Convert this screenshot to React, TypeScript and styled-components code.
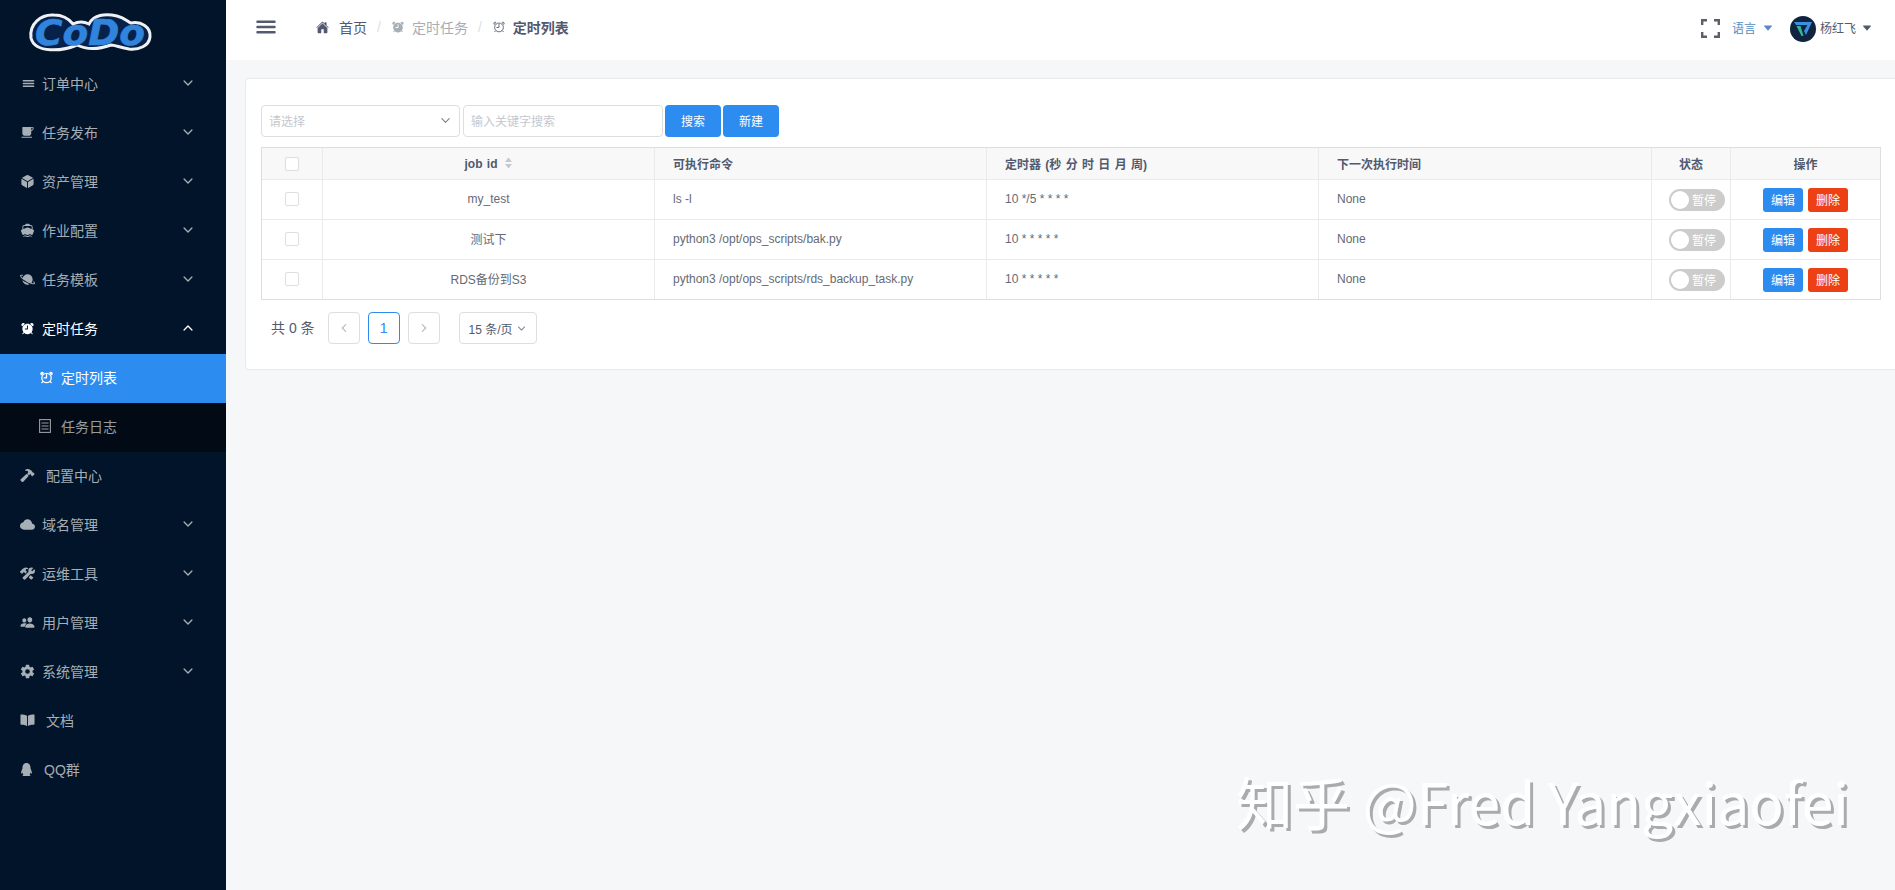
import React from "react";
import styled, { createGlobalStyle } from "styled-components";
import {
  IoReorderThree, IoCafe, IoCube, IoBoat, IoPlanet, IoAlarm, IoAlarmOutline,
  IoHammer, IoCloud, IoConstruct, IoPeople, IoSettingsSharp, IoBook, IoChevronDown, IoChevronUp,
  IoChevronBack, IoChevronForward, IoHome, IoMenu, IoCaretDown,
} from "react-icons/io5";
import { FaQq } from "react-icons/fa";

const FONT = `"Liberation Sans", "Noto Sans CJK SC", sans-serif`;

const Global = createGlobalStyle`
  html, body { margin: 0; padding: 0; height: 100%; overflow: hidden; }
  body { font-family: ${FONT}; background: #f5f7f9; }
  * { box-sizing: border-box; }
`;

const Page = styled.div`
  display: flex;
  width: 1895px;
  height: 890px;
  position: relative;
`;

const Sidebar = styled.aside`
  width: 226px;
  flex: none;
  background: #011429;
  display: flex;
  flex-direction: column;
`;

const LogoBox = styled.div`
  height: 60px;
  display: flex;
  padding: 12px 0 0 27px;
  flex: none;
`;

const MenuRow = styled.div<{ $active?: boolean }>`
  height: 49px;
  flex: none;
  display: flex;
  align-items: center;
  padding: 0 31px 3px 21px;
  font-size: 14px;
  color: ${(p) => (p.$active ? "#fff" : "rgba(255,255,255,.66)")};
`;

const SubRow = styled.div<{ $active?: boolean }>`
  height: 49px;
  flex: none;
  display: flex;
  align-items: center;
  padding: 0 0 3px 40px;
  font-size: 14px;
  color: ${(p) => (p.$active ? "#fff" : "rgba(255,255,255,.6)")};
  background: ${(p) => (p.$active ? "#2d8cf0" : "#020b15")};
`;

const ThickAlarm = styled(IoAlarmOutline)`
  path, circle, line { stroke-width: 44px; }
`;

const MenuIcon = styled.span<{ $w?: number }>`
  width: ${(p) => p.$w ?? 21}px;
  flex: none;
  display: flex;
  align-items: center;
  font-size: 15px;
  margin-left: -1px;
  margin-right: 1px;
`;

const Chevron = styled.span`
  margin-left: auto;
  display: flex;
  font-size: 14px;
`;

const Main = styled.div`
  flex: 1;
  display: flex;
  flex-direction: column;
  min-width: 0;
`;

const Header = styled.header`
  height: 60px;
  flex: none;
  background: #fff;
  display: flex;
  align-items: center;
  padding: 0 22px 6px 28px;
`;

const Burger = styled.span`
  display: flex;
  font-size: 26px;
  color: #515a6e;
  width: 63px;
  margin-left: -1px;
`;

const Crumb = styled.span<{ $tone: "dark" | "muted" | "bold"; $gap?: number }>`
  display: flex;
  align-items: center;
  font-size: 14px;
  gap: ${(p) => p.$gap ?? 7}px;
  font-weight: ${(p) => (p.$tone === "bold" ? 700 : 400)};
  color: ${(p) => (p.$tone === "muted" ? "#a8adb6" : "#515a6e")};
  svg { font-size: 14px; }
`;

const Sep = styled.span<{ $m: number }>`
  color: #dcdee2;
  font-size: 14px;
  margin: 0 ${(p) => p.$m}px;
`;

const HeaderRight = styled.div`
  margin-left: auto;
  display: flex;
  align-items: center;
  padding-top: 3px;
`;

const Lang = styled.span`
  font-size: 12px;
  color: #4f8fc4;
  display: flex;
  align-items: center;
  gap: 6px;
  margin-left: 12px;
  margin-right: 16px;
  padding-bottom: 2px;
  svg { color: #5b86cc; font-size: 12px; }
`;

const Avatar = styled.span`
  width: 26px;
  height: 26px;
  border-radius: 50%;
  background: #10233f;
  display: flex;
  align-items: center;
  justify-content: center;
  margin-right: 4px;
`;

const UserName = styled.span`
  font-size: 12px;
  color: #515a6e;
  display: flex;
  align-items: center;
  gap: 5px;
  padding-bottom: 2px;
  svg { font-size: 12px; }
`;

const Content = styled.div`
  padding: 18px 0 0 19px;
`;

const Card = styled.section`
  background: #fff;
  border: 1px solid #e8eaec;
  border-right: 0;
  border-radius: 4px 0 0 4px;
  height: 292px;
  padding: 26px 14px 0 15px;
`;

const Toolbar = styled.div`
  display: flex;
  height: 32px;
  margin-bottom: 10px;
`;

const Field = styled.div<{ $w: number; $mr: number }>`
  width: ${(p) => p.$w}px;
  margin-right: ${(p) => p.$mr}px;
  height: 32px;
  border: 1px solid #dcdee2;
  border-radius: 4px;
  display: flex;
  align-items: center;
  padding: 0 7px 2px;
  font-size: 12px;
  color: #c5c8ce;
  background: #fff;
`;

const FieldArrow = styled.span`
  margin-left: auto;
  display: flex;
  color: #808695;
  font-size: 13px;
`;

const PrimaryButton = styled.button`
  width: 56px;
  height: 32px;
  border: 0;
  border-radius: 4px;
  background: #2d8cf0;
  color: #fff;
  font: 12px ${FONT};
  margin-right: 2px;
  padding: 0 0 2px;
`;

const Table = styled.table`
  width: 1620px;
  table-layout: fixed;
  border-collapse: separate;
  border-spacing: 0;
  border: 1px solid #dcdee2;
  font-size: 12px;
  color: #666a72;
`;

const Th = styled.th<{ $center?: boolean }>`
  height: 32px;
  background: #f8f8f9;
  font-weight: 700;
  color: #515a6e;
  word-spacing: 1px;
  text-align: ${(p) => (p.$center ? "center" : "left")};
  padding: 0 18px;
  border-right: 1px solid #e8eaec;
  border-bottom: 1px solid #e8eaec;
  &:last-child { border-right: 0; }
`;

const Td = styled.td<{ $center?: boolean }>`
  height: 40px;
  text-align: ${(p) => (p.$center ? "center" : "left")};
  padding: 0 18px 2px;
  border-right: 1px solid #e8eaec;
  border-bottom: 1px solid #e8eaec;
  white-space: nowrap;
  &:last-child { border-right: 0; }
  tr:last-child > & { border-bottom: 0; height: 39px; }
`;

const CheckCell = styled(Td)`
  padding: 0 0 1px;
`;

const CheckHead = styled(Th)`
  padding: 0;
`;

const Check = styled.span`
  display: inline-block;
  width: 14px;
  height: 14px;
  border: 1px solid #dcdee2;
  border-radius: 2px;
  background: #fff;
  vertical-align: middle;
`;

const Sort = styled.svg`
  margin-left: 6px;
  vertical-align: -1px;
`;

const SwitchCell = styled(Td)`
  padding: 0 0 0 17px;
`;

const Switch = styled.span`
  display: flex;
  align-items: center;
  width: 56px;
  height: 22px;
  border-radius: 11px;
  background: #ccc;
  color: #fff;
  font-size: 12px;
  padding-left: 2px;
  gap: 3px;
`;

const Knob = styled.span`
  width: 18px;
  height: 18px;
  border-radius: 50%;
  background: #fff;
`;

const Actions = styled.div`
  display: flex;
  justify-content: center;
  gap: 5px;
`;

const SmallButton = styled.button<{ $danger?: boolean }>`
  width: 40px;
  height: 24px;
  border: 0;
  border-radius: 3px;
  color: #fff;
  font: 12px ${FONT};
  padding: 0;
  background: ${(p) => (p.$danger ? "#ed4014" : "#2d8cf0")};
`;

const ActionCell = styled(Td)`
  padding: 0;
`;

const Pager = styled.div`
  display: flex;
  align-items: center;
  margin-top: 12px;
  padding-left: 10px;
  height: 32px;
  font-size: 14px;
  color: #515a6e;
`;

const Total = styled.span`
  margin-right: 13px;
  white-space: nowrap;
  padding-bottom: 3px;
`;

const PageBtn = styled.span<{ $active?: boolean }>`
  width: 32px;
  height: 32px;
  border: 1px solid ${(p) => (p.$active ? "#2d8cf0" : "#dcdee2")};
  border-radius: 4px;
  margin-right: 8px;
  display: flex;
  align-items: center;
  justify-content: center;
  font-size: ${(p) => (p.$active ? "14px" : "12px")};
  color: ${(p) => (p.$active ? "#2d8cf0" : "#b5bac4")};
  background: #fff;
`;

const SizeSelect = styled.span`
  width: 78px;
  height: 32px;
  margin-left: 11px;
  border: 1px solid #dcdee2;
  border-radius: 4px;
  display: flex;
  align-items: center;
  padding-left: 9px;
  gap: 3px;
  font-size: 12px;
  white-space: nowrap;
  svg { font-size: 11px; color: #808695; }
`;

const Watermark = styled.div`
  position: absolute;
  left: 1236px;
  top: 760px;
  font-family: "Noto Sans CJK SC", sans-serif;
  font-size: 57px;
  line-height: 80px;
  color: #fff;
  text-shadow: 3px 3px 0 #a9abad;
  white-space: nowrap;
`;

const Logo = () => (
  <svg width="126" height="42" viewBox="0 0 126 42" aria-label="CoDo">
    <path
      d="M4 26 C2 12 14 2 27 3 C37 3 42 7 46 12 C52 9 58 10 62 12 C66 3 78 1 90 4 C98 6 101 10 104 11 C114 9 124 15 123 25 C122 34 112 38 102 37 C94 36 88 33 84 33 C70 38 58 37 50 33 C36 39 8 42 4 26 Z"
      fill="#06214a"
      stroke="#eef1f5"
      strokeWidth="3"
    />
    <text
      x="8"
      y="33"
      fontFamily="'DejaVu Sans', sans-serif"
      fontWeight="700"
      fontStyle="italic"
      fontSize="36"
      fill="#3184dc"
      stroke="#3184dc"
      strokeWidth="0.6"
      textLength="110"
      lengthAdjust="spacingAndGlyphs"
    >
      CoDo
    </text>
  </svg>
);

const VLogo = () => (
  <svg width="20" height="18" viewBox="0 0 20 18">
    <path d="M1 2 H19 L13 15 L11 11 L14.5 5 H3 Z" fill="#3d8fe0" />
    <path d="M3.5 6 H7.5 L10.5 16 H8.5 Z" fill="#2fb89a" />
  </svg>
);

const Fullscreen = () => (
  <svg width="19" height="19" viewBox="0 0 19 19" fill="none" stroke="#5a5f69" strokeWidth="2.4">
    <path d="M1.2 6V1.2H6M13 1.2H17.8V6M17.8 13V17.8H13M6 17.8H1.2V13" />
  </svg>
);

const LogList = () => (
  <svg width="12" height="14" viewBox="0 0 12 14" fill="none" stroke="currentColor" strokeWidth="1.1">
    <rect x="0.6" y="0.6" width="10.8" height="12.8" />
    <path d="M2.5 4H9.5M2.5 7H9.5M2.5 10H9.5" />
  </svg>
);

type Item = { icon: React.ReactNode; label: string; open?: boolean; chevron?: boolean; active?: boolean; w?: number };

const items: Item[] = [
  { icon: <IoReorderThree size={17} />, label: "订单中心", chevron: true },
  { icon: <IoCafe />, label: "任务发布", chevron: true },
  { icon: <IoCube />, label: "资产管理", chevron: true },
  { icon: <IoBoat />, label: "作业配置", chevron: true },
  { icon: <IoPlanet />, label: "任务模板", chevron: true },
  { icon: <IoAlarm />, label: "定时任务", chevron: true, open: true, active: true },
  { icon: <IoHammer />, label: "配置中心", w: 25 },
  { icon: <IoCloud />, label: "域名管理", chevron: true },
  { icon: <IoConstruct />, label: "运维工具", chevron: true },
  { icon: <IoPeople />, label: "用户管理", chevron: true },
  { icon: <IoSettingsSharp />, label: "系统管理", chevron: true },
  { icon: <IoBook />, label: "文档", w: 25 },
  { icon: <FaQq size={13} />, label: "QQ群", w: 23 },
];

const rows = [
  { id: "my_test", cmd: "ls -l", cron: "10 */5 * * * *" },
  { id: "测试下", cmd: "python3 /opt/ops_scripts/bak.py", cron: "10 * * * * *" },
  { id: "RDS备份到S3", cmd: "python3 /opt/ops_scripts/rds_backup_task.py", cron: "10 * * * * *" },
];

const widths = [61, 332, 332, 332, 333, 79, 149];

export default function App() {
  return (
    <Page>
      <Global />
      <Sidebar>
        <LogoBox>
          <Logo />
        </LogoBox>
        {items.map((it) => (
          <React.Fragment key={it.label}>
            <MenuRow $active={it.active}>
              <MenuIcon $w={it.w}>{it.icon}</MenuIcon>
              {it.label}
              {it.chevron && <Chevron>{it.open ? <IoChevronUp /> : <IoChevronDown />}</Chevron>}
            </MenuRow>
            {it.open && (
              <>
                <SubRow $active>
                  <MenuIcon><ThickAlarm /></MenuIcon>
                  定时列表
                </SubRow>
                <SubRow>
                  <MenuIcon><LogList /></MenuIcon>
                  任务日志
                </SubRow>
              </>
            )}
          </React.Fragment>
        ))}
      </Sidebar>
      <Main>
        <Header>
          <Burger><IoMenu /></Burger>
          <Crumb $tone="dark" $gap={10}><IoHome size={13} />首页</Crumb>
          <Sep $m={10}>/</Sep>
          <Crumb $tone="muted"><IoAlarm />定时任务</Crumb>
          <Sep $m={10}>/</Sep>
          <Crumb $tone="bold"><IoAlarmOutline />定时列表</Crumb>
          <HeaderRight>
            <Fullscreen />
            <Lang>语言<IoCaretDown /></Lang>
            <Avatar><VLogo /></Avatar>
            <UserName>杨红飞<IoCaretDown /></UserName>
          </HeaderRight>
        </Header>
        <Content>
          <Card>
            <Toolbar>
              <Field $w={199} $mr={3}>
                请选择
                <FieldArrow><IoChevronDown /></FieldArrow>
              </Field>
              <Field $w={200} $mr={2}>输入关键字搜索</Field>
              <PrimaryButton>搜索</PrimaryButton>
              <PrimaryButton>新建</PrimaryButton>
            </Toolbar>
            <Table>
              <colgroup>
                {widths.map((w, i) => (
                  <col key={i} style={{ width: w }} />
                ))}
              </colgroup>
              <thead>
                <tr>
                  <CheckHead $center><Check /></CheckHead>
                  <Th $center>
                    job id
                    <Sort width="9" height="12" viewBox="0 0 9 12" fill="#c5c8ce">
                      <path d="M4.5 0.5 8 5H1Z M4.5 11.5 1 7H8Z" />
                    </Sort>
                  </Th>
                  <Th>可执行命令</Th>
                  <Th>定时器 (秒 分 时 日 月 周)</Th>
                  <Th>下一次执行时间</Th>
                  <Th $center>状态</Th>
                  <Th $center>操作</Th>
                </tr>
              </thead>
              <tbody>
                {rows.map((r) => (
                  <tr key={r.id}>
                    <CheckCell $center><Check /></CheckCell>
                    <Td $center>{r.id}</Td>
                    <Td>{r.cmd}</Td>
                    <Td>{r.cron}</Td>
                    <Td>None</Td>
                    <SwitchCell>
                      <Switch><Knob />暂停</Switch>
                    </SwitchCell>
                    <ActionCell>
                      <Actions>
                        <SmallButton>编辑</SmallButton>
                        <SmallButton $danger>删除</SmallButton>
                      </Actions>
                    </ActionCell>
                  </tr>
                ))}
              </tbody>
            </Table>
            <Pager>
              <Total>共 0 条</Total>
              <PageBtn><IoChevronBack /></PageBtn>
              <PageBtn $active>1</PageBtn>
              <PageBtn><IoChevronForward /></PageBtn>
              <SizeSelect>15 条/页<IoChevronDown /></SizeSelect>
            </Pager>
          </Card>
        </Content>
      </Main>
      <Watermark>知乎 @Fred Yangxiaofei</Watermark>
    </Page>
  );
}
